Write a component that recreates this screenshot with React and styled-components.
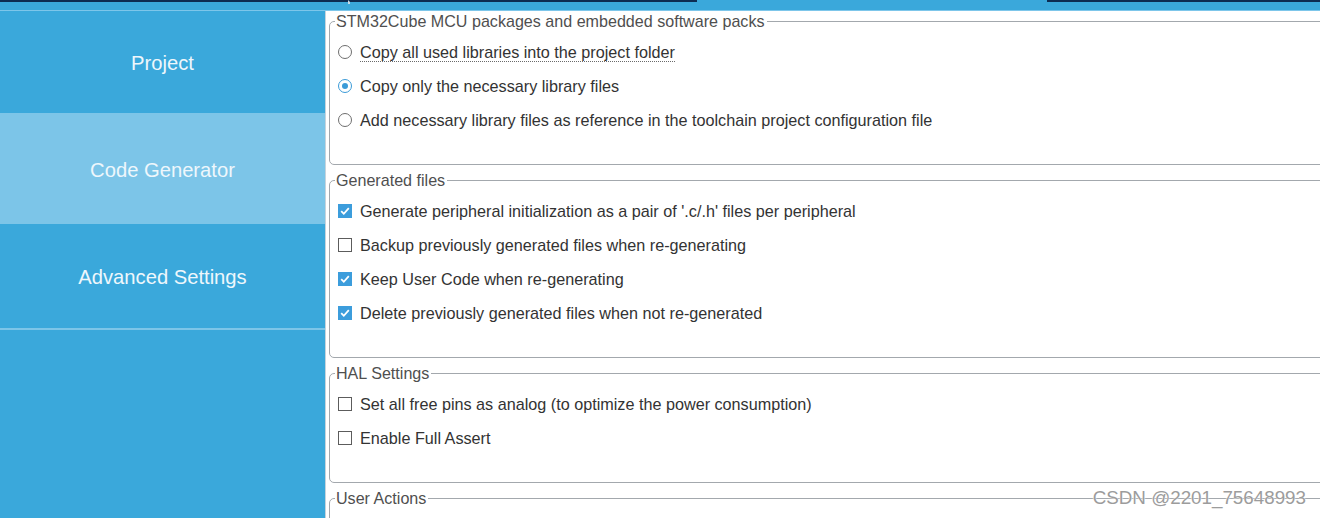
import React from "react";
import styled, { createGlobalStyle } from "styled-components";

const GlobalStyle = createGlobalStyle`
  html, body {
    margin: 0;
    padding: 0;
    overflow: hidden;
    background: #ffffff;
  }
  * { box-sizing: border-box; }
`;

const Page = styled.div`
  position: relative;
  width: 1320px;
  height: 518px;
  display: flex;
  flex-direction: column;
  font-family: "Liberation Sans", Arial, sans-serif;
  overflow: hidden;
`;

const TopBar = styled.div`
  height: 11px;
  display: flex;
  background: #3aa8db;
  border-bottom: 1px solid #7dc6ea;
`;

const Tab = styled.div`
  width: ${(p) => (p.$width ? `${p.$width}px` : "auto")};
  flex: ${(p) => (p.$width ? "none" : "1")};
  border-top: 2px solid ${(p) => (p.$active ? "transparent" : "#0d2c52")};
  border-left: ${(p) => (p.$sep ? "2px solid #c9dbe6" : "none")};
  height: 4px;
`;

const Body = styled.div`
  flex: 1;
  display: flex;
  min-height: 0;
`;

const Sidebar = styled.nav`
  width: 326px;
  flex: none;
  background: #3aa8db;
  border-right: 1px solid #c6d3dc;
  display: flex;
  flex-direction: column;
`;

const NavItem = styled.div`
  height: ${(p) => p.$h}px;
  flex: none;
  display: flex;
  align-items: center;
  justify-content: center;
  padding-top: 2px;
  font-size: 20.2px;
  color: #eef7fc;
  background: ${(p) => (p.$active ? "#7cc5e8" : "#3aa8db")};
  border-bottom: ${(p) => p.$line}px solid #7cc5e8;
`;

const Content = styled.main`
  flex: 1;
  padding: 1px 0 0 3px;
  display: flex;
  flex-direction: column;
  gap: 6px;
  overflow: hidden;
`;

const Group = styled.fieldset`
  margin: 0 -30px 0 0;
  padding: 5px 8px 27px 8px;
  border: 1px solid #a3a8ad;
  border-radius: 5px;
  min-width: 0;
`;

const Legend = styled.legend`
  margin-left: -3px;
  padding: 0 2px 0 1px;
  font-size: 16.1px;
  line-height: 18px;
  color: #4f4f4f;
`;

const Row = styled.label`
  height: 34px;
  display: flex;
  align-items: center;
  gap: 8px;
  font-size: 16.2px;
  color: #333333;
`;

const Text = styled.span`
  line-height: 18px;
  border-bottom: 1px ${(p) => (p.$focus ? "dotted #6a6a6a" : "solid transparent")};
  margin-top: 1px;
`;

const RadioBox = styled.span`
  width: 14px;
  height: 14px;
  flex: none;
  border-radius: 50%;
  border: 1px solid ${(p) => (p.$on ? "#3b9bd8" : "#6e6e6e")};
  background: #ffffff;
  display: flex;
  align-items: center;
  justify-content: center;
  &::after {
    content: "";
    width: 6px;
    height: 6px;
    border-radius: 50%;
    background: ${(p) => (p.$on ? "#3b9bd8" : "transparent")};
  }
`;

const CheckBox = styled.span`
  width: 14px;
  height: 14px;
  flex: none;
  border: 1px solid ${(p) => (p.$on ? "#3c9ddc" : "#5c5c5c")};
  background: ${(p) => (p.$on ? "#3c9ddc" : "#ffffff")};
  display: flex;
  align-items: center;
  justify-content: center;
`;

const Watermark = styled.div`
  position: absolute;
  right: 14px;
  top: 488px;
  font-size: 18.8px;
  line-height: 20px;
  color: #9c9c9c;
  text-shadow: 0 0 2px #ffffff, 0 0 1px #ffffff;
`;

const Radio = ({ on, focus, children }) => (
  <Row>
    <RadioBox $on={on} />
    <Text $focus={focus}>{children}</Text>
  </Row>
);

const Check = ({ on, children }) => (
  <Row>
    <CheckBox $on={on}>
      {on && (
        <svg width="12" height="12" viewBox="0 0 12 12">
          <path d="M2.2 6.2 L4.8 8.8 L9.8 3.2" fill="none" stroke="#ffffff" strokeWidth="1.8" />
        </svg>
      )}
    </CheckBox>
    <Text>{children}</Text>
  </Row>
);

export default function App() {
  return (
    <>
      <GlobalStyle />
      <Page>
        <TopBar>
          <Tab $width={348} />
          <Tab $width={349} $sep />
          <Tab $width={350} $active />
          <Tab />
        </TopBar>
        <Body>
          <Sidebar>
            <NavItem $h={104} $line={2}>Project</NavItem>
            <NavItem $h={109} $line={0} $active>Code Generator</NavItem>
            <NavItem $h={106} $line={2}>Advanced Settings</NavItem>
          </Sidebar>
          <Content>
            <Group>
              <Legend>STM32Cube MCU packages and embedded software packs</Legend>
              <Radio focus>Copy all used libraries into the project folder</Radio>
              <Radio on>Copy only the necessary library files</Radio>
              <Radio>Add necessary library files as reference in the toolchain project configuration file</Radio>
            </Group>
            <Group>
              <Legend>Generated files</Legend>
              <Check on>Generate peripheral initialization as a pair of '.c/.h' files per peripheral</Check>
              <Check>Backup previously generated files when re-generating</Check>
              <Check on>Keep User Code when re-generating</Check>
              <Check on>Delete previously generated files when not re-generated</Check>
            </Group>
            <Group>
              <Legend>HAL Settings</Legend>
              <Check>Set all free pins as analog (to optimize the power consumption)</Check>
              <Check>Enable Full Assert</Check>
            </Group>
            <Group>
              <Legend>User Actions</Legend>
              <Row />
            </Group>
          </Content>
        </Body>
        <Watermark>CSDN @2201_75648993</Watermark>
      </Page>
    </>
  );
}
